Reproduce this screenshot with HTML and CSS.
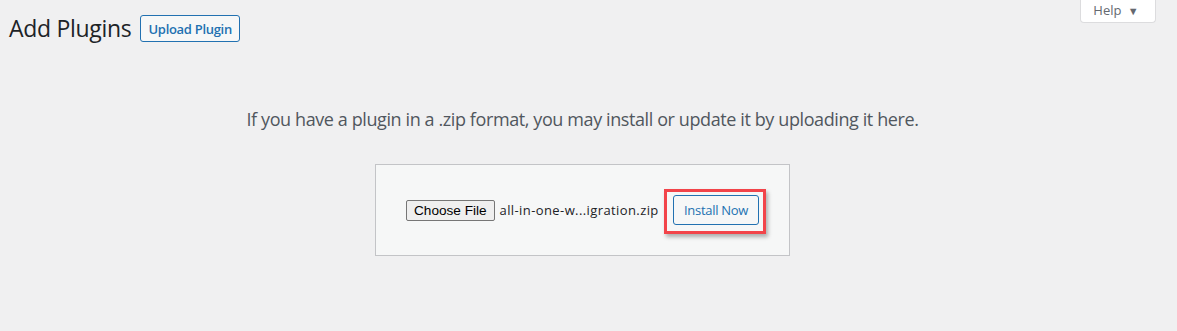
FILE: index.html
```html
<!DOCTYPE html>
<html lang="en">
<head>
    <meta charset="UTF-8">
    <meta name="viewport" content="width=device-width, initial-scale=1.0">
    <title>Add Plugins</title>
    <link rel="stylesheet" href="styles.css">
</head>
<body>
    <div class="wrap">
        <div class="top-bar">
            <div class="heading">
                <h1>Add Plugins</h1>
                <button class="btn page-title-action">Upload Plugin</button>
            </div>
            <button class="help-tab">Help <span class="arrow">&#9660;</span></button>
        </div>

        <div class="upload-plugin">
            <p class="install-help">If you have a plugin in a .zip format, you may install or update it by uploading it here.</p>
            <form class="upload-form">
                <div class="file-field">
                    <span class="file-btn">Choose File</span>
                    <span class="file-name">all-in-one-w...igration.zip</span>
                </div>
                <span class="highlight">
                    <button type="button" class="btn install-btn">Install Now</button>
                </span>
            </form>
        </div>
    </div>
</body>
</html>
```

FILE: styles.css
```css
html, body {
    margin: 0;
    background: #f0f0f1;
}
body {
    font-family: "Open Sans", "Noto Sans", sans-serif;
    color: #3c434a;
    font-size: 13px;
}
.wrap {
    padding: 0 21px 0 9px;
}
.top-bar {
    display: flex;
    justify-content: space-between;
    align-items: flex-start;
}
.heading {
    display: flex;
    align-items: center;
    gap: 9px;
    padding-top: 14px;
}
h1 {
    margin: 0;
    font-size: 23px;
    font-weight: 400;
    line-height: 29px;
    color: #1d2327;
    letter-spacing: -0.3px;
}
.btn {
    font-family: inherit;
    font-size: 13px;
    background: #f6f7f7;
    color: #2271b1;
    border: 1px solid #2271b1;
    border-radius: 3px;
    cursor: pointer;
}
.page-title-action {
    height: 27px;
    padding: 0 7px;
    font-weight: 600;
    letter-spacing: -0.3px;
}
.help-tab {
    width: 76px;
    height: 24px;
    margin-top: -1px;
    background: #fff;
    border: 1px solid #dcdcde;
    border-top: none;
    border-radius: 0 0 4px 4px;
    color: #646970;
    font-family: inherit;
    font-size: 13px;
    padding: 0 4px 2px 0;
}
.help-tab .arrow {
    font-size: 11px;
    margin-left: 3px;
    vertical-align: 0;
}
.upload-plugin {
    display: flex;
    flex-direction: column;
    align-items: center;
}
.install-help {
    margin: 0;
    padding-top: 64px;
    font-size: 18px;
    line-height: 24px;
    color: #50575e;
    letter-spacing: -0.4px;
}
.upload-form {
    margin-top: 33px;
    width: 353px;
    padding: 30px;
    display: flex;
    justify-content: space-between;
    align-items: center;
    background: #f6f7f7;
    border: 1px solid #c3c4c7;
}
.file-field {
    display: flex;
    align-items: center;
    gap: 5px;
}
.file-btn {
    font-family: "Liberation Sans", Arial, sans-serif;
    font-size: 13.6px;
    color: #000;
    background: #efefef;
    border: 1px solid #767676;
    border-radius: 2px;
    padding: 2px 7px;
    height: 15px;
    line-height: 15px;
}
.file-name {
    color: #1d2327;
    letter-spacing: 0.4px;
}
.highlight {
    position: relative;
    display: flex;
}
.highlight::after {
    content: "";
    position: absolute;
    left: -9px;
    right: -7px;
    top: -6px;
    bottom: -9px;
    border: 3px solid #f2444a;
    box-shadow: 2px 3px 4px rgba(0, 0, 0, 0.3);
    pointer-events: none;
}
.install-btn {
    height: 30px;
    padding: 0 10px;
    font-weight: 400;
    letter-spacing: -0.3px;
}
```
